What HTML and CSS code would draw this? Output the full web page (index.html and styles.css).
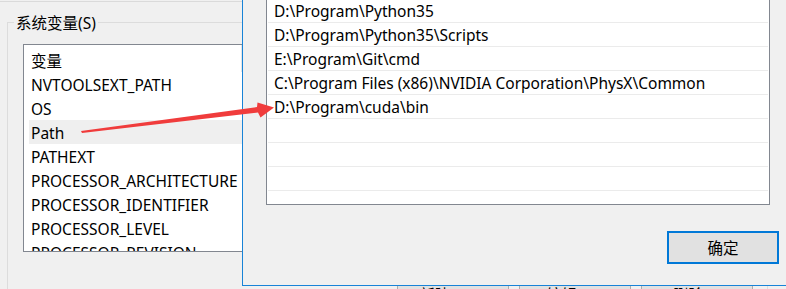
FILE: index.html
```html
<!DOCTYPE html>
<html lang="zh-CN">
<head>
  <meta charset="UTF-8" />
  <title>编辑环境变量</title>
  <link rel="stylesheet" href="styles.css">
</head>
<body>

  <!-- 环境变量 (back window) -->
  <div id="env-window">
    <div class="top-rule"></div>
    <div class="group">
      <div class="group-title">系统变量(S)</div>
      <div class="var-list">
        <div class="var-head">变量</div>
        <div class="var-row">NVTOOLSEXT_PATH</div>
        <div class="var-row">OS</div>
        <div class="var-row hover">Path</div>
        <div class="var-row">PATHEXT</div>
        <div class="var-row">PROCESSOR_ARCHITECTURE</div>
        <div class="var-row">PROCESSOR_IDENTIFIER</div>
        <div class="var-row">PROCESSOR_LEVEL</div>
        <div class="var-row">PROCESSOR_REVISION</div>
      </div>
      <div class="group-actions">
        <button class="win-btn">新建(W)...</button>
        <button class="win-btn">编辑(I)...</button>
        <button class="win-btn">删除(L)</button>
      </div>
    </div>
  </div>

  <!-- 编辑环境变量 (front dialog) -->
  <div id="edit-dialog">
    <div class="path-list">
      <div class="path-row">%SystemRoot%\system32</div>
      <div class="path-row">%SystemRoot%</div>
      <div class="path-row">%SystemRoot%\System32\Wbem</div>
      <div class="path-row">D:\Program\Python35</div>
      <div class="path-row">D:\Program\Python35\Scripts</div>
      <div class="path-row">E:\Program\Git\cmd</div>
      <div class="path-row">C:\Program Files (x86)\NVIDIA Corporation\PhysX\Common</div>
      <div class="path-row">D:\Program\cuda\bin</div>
      <div class="path-row"></div>
      <div class="path-row"></div>
      <div class="path-row"></div>
      <div class="path-row"></div>
    </div>
    <div class="dialog-actions">
      <button class="win-btn primary">确定</button>
      <button class="win-btn">取消</button>
    </div>
  </div>

  <!-- annotation arrow -->
  <svg class="callout" width="786" height="289" viewBox="0 0 786 289">
    <polygon points="81,131 257,107 257.5,102.5 274,107.5 260.5,117.5 258,112.5 82,133" fill="#f03c3c" />
  </svg>

</body>
</html>
```

FILE: styles.css
```css
/* RESET */
* { margin:0; padding:0; box-sizing:border-box; }
html, body { width:786px; height:289px; overflow:hidden; }
body {
  position:relative; background:#f0f0f0; color:#000;
  font:15.5px/1 "Noto Sans", "Noto Sans CJK SC", sans-serif;
}

/* BACK WINDOW */
#env-window { padding-top:1px; }
.top-rule { width:242px; height:1px; background:#dadada; }
.group {
  width:761px; height:330px; margin:20px 0 0 7px;
  border:1px solid #dcdcdc;
}
.group-title {
  width:fit-content; margin:-10px 0 0 6px; padding:0 2px;
  line-height:20px; background:#f0f0f0;
}
.var-list {
  width:320px; height:208px; margin:11px 0 0 15px;
  border:1px solid #828790; background:#fff;
  padding-left:5px; overflow:hidden;
}
.var-head {
  width:213px; height:27px; padding:6px 0 0 2px;
  line-height:21px; border-right:1px solid #e5e5e5;
}
.var-row {
  height:24px; line-height:24px; padding:1px 0 0 2px; white-space:nowrap;
}
.var-row.hover { background:#efefef; }
.group-actions {
  display:flex; justify-content:flex-end; gap:10px;
  margin-top:30px; padding-right:14px;
}

/* BUTTONS */
.win-btn {
  width:112px; height:26px; font:inherit; line-height:24px; color:#000;
  background:#e1e1e1; border:1px solid #adadad;
}
.win-btn.primary { height:33px; border:2px solid #0078d7; }

/* FRONT DIALOG */
#edit-dialog {
  position:absolute; left:242px; top:-100px;
  width:700px; height:386px;
  background:#f0f0f0; border:1px solid #1883d7;
  padding:25px 0 0 23px;
}
.path-list {
  width:504px; height:279px;
  border:1px solid #828790; background:#fff;
  padding:0 1px; overflow:hidden;
}
.path-row {
  height:24px; line-height:24px; padding-left:6px;
  border-bottom:1px solid #ebebeb; white-space:nowrap; overflow:hidden;
}
.dialog-actions { display:flex; gap:10px; margin:26px 0 0 401px; }

/* ARROW */
.callout { position:absolute; left:0; top:0; pointer-events:none; }
```
